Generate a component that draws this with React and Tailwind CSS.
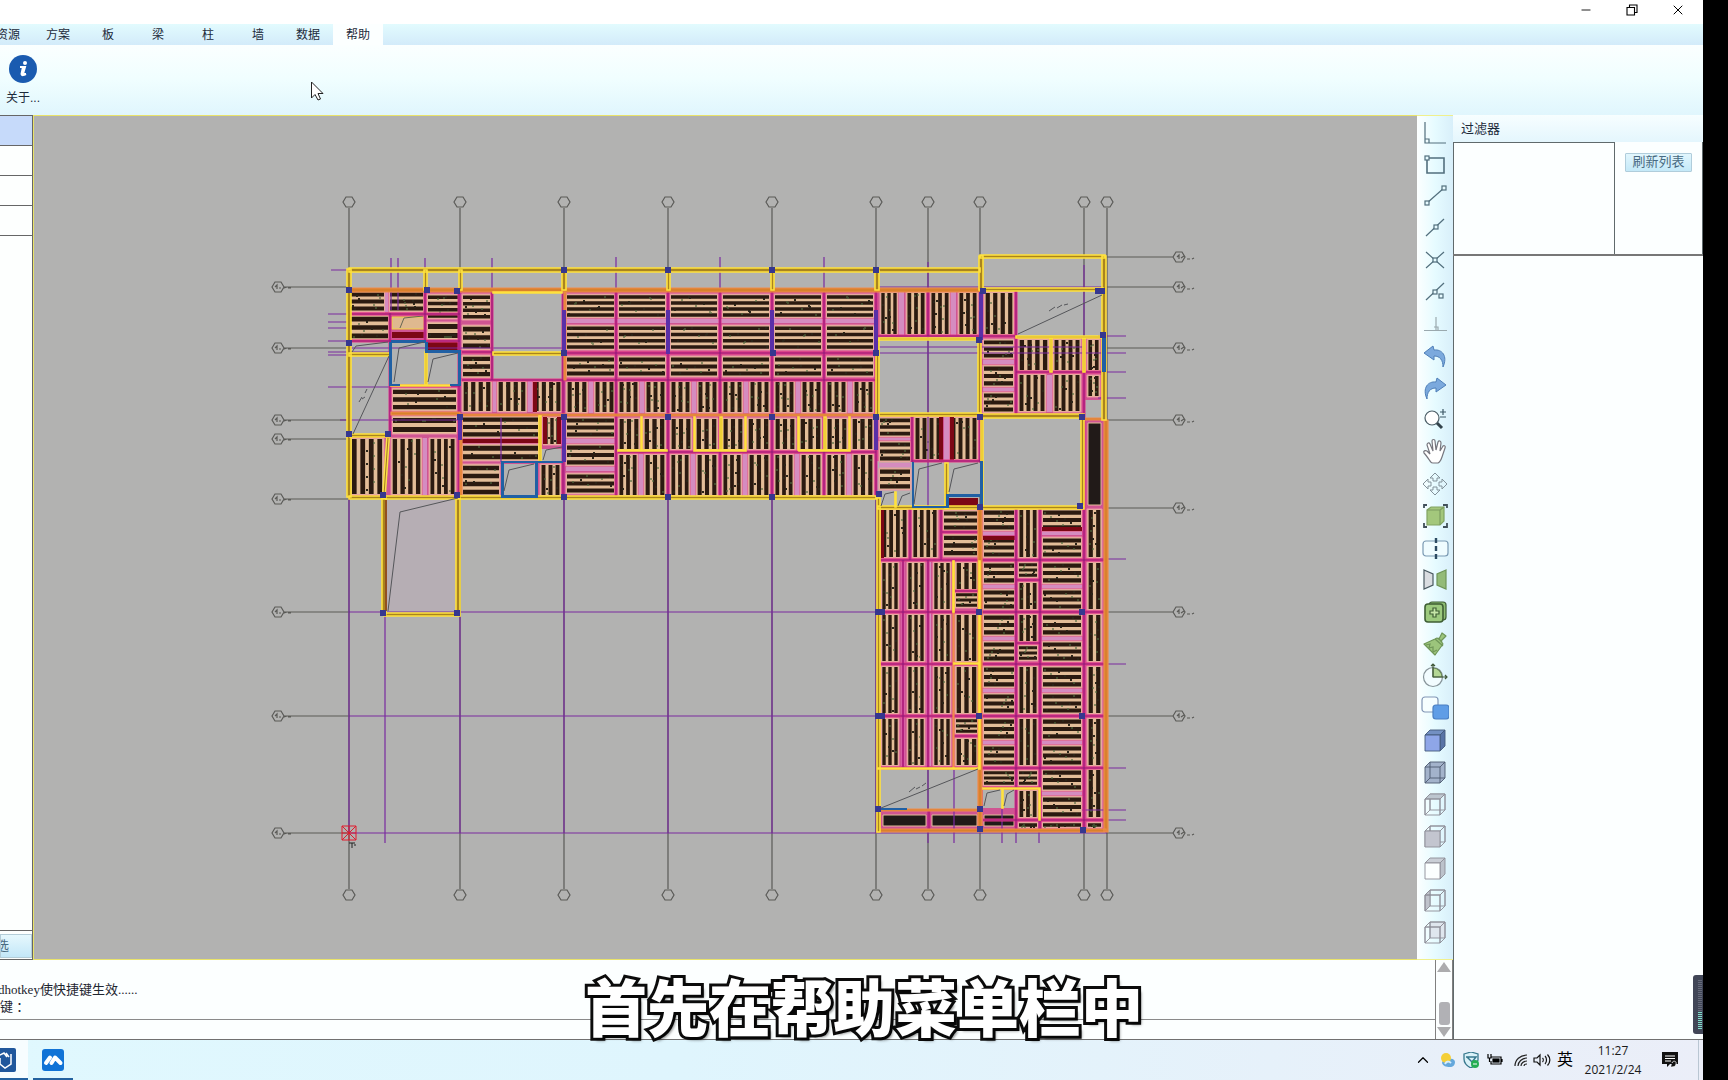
import { Minus, X, ChevronUp } from 'lucide-react';

const MENUS = ['资源', '方案', '板', '梁', '柱', '墙', '数据', '帮助'];

/* ---------- drawing data: [x1, y1, x2, y2, bars] ---------- */

const COLS = [[566, 615], [618, 666], [670, 718], [722, 770], [774, 822], [826, 874]];
const BANDS = [[509, 558], [562, 610], [614, 662], [666, 714], [718, 766]];

const H_PANELS = [
  [349, 291, 385, 312, 3], [389, 291, 424, 312, 3], [427, 294, 459, 319, 4],
  [350, 315, 389, 340, 3], [427, 322, 459, 340, 2],
  [462, 294, 491, 320, 4], [462, 325, 491, 350, 3], [462, 355, 491, 378, 3],
  [392, 388, 457, 411, 3], [392, 416, 457, 434, 2],
  [462, 416, 539, 438, 3], [462, 444, 539, 461, 2], [462, 464, 500, 496, 4],
  [566, 417, 615, 438, 3], [566, 444, 615, 466, 3], [566, 473, 615, 494, 3],
  [983, 339, 1014, 359, 3], [983, 365, 1014, 387, 3], [983, 392, 1014, 413, 3],
  [879, 417, 911, 437, 3], [879, 441, 911, 462, 3], [879, 468, 911, 490, 3],
  [943, 510, 978, 531, 3], [943, 534, 978, 557, 3], [955, 592, 978, 608, 3],
  [955, 718, 978, 734, 3], [1018, 562, 1038, 578, 3], [1018, 645, 1038, 661, 3],
  [983, 770, 1015, 786, 3], [1018, 770, 1038, 786, 3],
  [1042, 769, 1082, 791, 3], [1042, 796, 1082, 818, 3],
  [1042, 822, 1082, 828, 1], [1018, 822, 1038, 828, 1], [1087, 822, 1102, 828, 1],
];

COLS.forEach(([a, b]) => {
  H_PANELS.push([a, 294, b, 318, 4], [a, 325, b, 350, 4], [a, 356, b, 377, 3]);
});
BANDS.forEach(([a, b]) => {
  H_PANELS.push([983, a, 1015, a + 22, 3], [983, b - 21, 1015, b, 3]);
  H_PANELS.push([1042, a, 1082, a + 22, 3], [1042, b - 21, 1082, b, 3]);
});

const V_PANELS = [
  [350, 438, 384, 495, 4], [391, 438, 422, 495, 4], [429, 438, 456, 495, 4],
  [462, 381, 492, 412, 4], [497, 381, 527, 412, 4], [533, 381, 562, 412, 4],
  [540, 464, 561, 496, 3], [543, 417, 561, 445, 3],
  [880, 292, 898, 335, 3], [906, 292, 926, 335, 3], [930, 292, 950, 335, 3], [958, 292, 978, 335, 3],
  [984, 292, 1014, 335, 4],
  [1018, 339, 1049, 371, 4], [1053, 339, 1081, 371, 4], [1087, 339, 1100, 371, 2],
  [1018, 374, 1046, 412, 4], [1053, 374, 1081, 412, 4], [1087, 375, 1100, 397, 2],
  [914, 417, 942, 460, 4], [950, 417, 978, 460, 4],
  [881, 509, 908, 558, 4], [912, 509, 938, 558, 4],
  [955, 562, 978, 590, 3], [955, 614, 978, 662, 3], [955, 666, 978, 714, 3], [955, 738, 978, 766, 3],
  [1018, 509, 1038, 558, 3], [1018, 582, 1038, 610, 3], [1018, 614, 1038, 642, 3],
  [1018, 666, 1038, 714, 3], [1018, 718, 1038, 766, 3], [1018, 790, 1038, 818, 3],
  [1087, 769, 1102, 818, 2],
];

COLS.forEach(([a, b], i) => {
  const mid = Math.round((a + b) / 2);
  V_PANELS.push([a, 381, mid - 3, 413, 3], [mid + 3, 381, b, 413, 3]);
  if (i > 0) {
    V_PANELS.push([a, 418, mid - 2, 450, 3], [mid + 1, 418, b, 450, 3]);
    V_PANELS.push([a, 454, mid - 4, 496, 3], [mid + 2, 454, b, 496, 3]);
  }
});
BANDS.forEach(([a, b], i) => {
  V_PANELS.push([1087, a, 1102, b, 2]);
  if (i > 0) V_PANELS.push([881, a, 899, b, 3], [907, a, 925, b, 3], [933, a, 951, b, 3]);
});

// slab areas that sit behind the panels
const SLABS = [
  [349, 289, 460, 341], [391, 386, 460, 436], [349, 436, 460, 497], [460, 291, 493, 380],
  [460, 379, 565, 498], [563, 291, 876, 498], [877, 290, 980, 337], [980, 290, 1017, 416],
  [1016, 337, 1102, 373], [1016, 373, 1084, 415], [1084, 373, 1102, 400], [877, 416, 980, 461],
  [877, 508, 980, 768], [980, 508, 1106, 832], [877, 810, 982, 832], [1084, 420, 1106, 510],
];

// openings left free of slabs
const VOIDS = [
  [504, 464, 536, 496], [541, 449, 562, 461], [912, 463, 945, 507], [948, 463, 980, 496],
  [879, 492, 911, 507], [983, 790, 1015, 808],
];

const DARK_RED = [
  [392, 332, 424, 338], [427, 342, 459, 350], [462, 439, 539, 443], [533, 382, 537, 412],
  [543, 417, 547, 444], [557, 417, 561, 444], [939, 417, 943, 460], [950, 417, 954, 460],
  [949, 498, 978, 506], [881, 510, 884, 558], [983, 536, 1015, 540], [1042, 527, 1082, 531],
];

const YELLOW = [
  [349, 268, 980, 272], [347, 269, 351, 497], [424, 270, 427, 290], [459, 270, 462, 290],
  [562, 270, 566, 290], [667, 270, 670, 290], [771, 270, 774, 290], [875, 270, 879, 290],
  [980, 255, 1105, 258], [979, 256, 983, 290], [1102, 256, 1106, 420], [983, 288, 1103, 291],
  [493, 292, 562, 293], [493, 352, 562, 355], [349, 353, 390, 356], [350, 434, 390, 437],
  [391, 385, 450, 386], [425, 352, 427, 385], [349, 496, 876, 499], [382, 498, 386, 614],
  [456, 498, 460, 614], [384, 613, 460, 616], [879, 338, 980, 340], [876, 340, 879, 415],
  [978, 340, 981, 415], [879, 413, 980, 416], [980, 414, 1084, 418], [981, 418, 983, 506],
  [1081, 418, 1084, 506], [945, 463, 948, 508], [877, 498, 880, 832], [878, 506, 1084, 509],
  [1016, 336, 1103, 338], [1050, 338, 1052, 372], [1083, 338, 1085, 372],
  [895, 492, 896, 507], [1002, 789, 1003, 808], [983, 788, 1040, 789], [1039, 789, 1040, 820],
  [641, 417, 642, 450], [694, 417, 695, 450], [720, 417, 722, 450], [745, 417, 746, 450],
  [798, 417, 799, 450], [824, 417, 826, 450], [849, 417, 850, 450], [618, 450, 667, 451],
  [694, 450, 746, 451], [799, 450, 850, 451], [539, 416, 541, 462], [877, 768, 980, 769],
  [953, 561, 954, 612], [954, 663, 980, 664], [979, 561, 980, 768],
];

const ORANGE = [
  [349, 288, 980, 292], [391, 412, 460, 415], [460, 414, 876, 416], [460, 416, 462, 497],
  [978, 508, 982, 832], [1104, 420, 1108, 832], [877, 829, 1106, 832], [877, 809, 980, 811],
  [953, 561, 954, 768], [1084, 418, 1106, 420], [564, 292, 566, 380],
];

const MAGENTA_H = [
  [349, 460, 314], [349, 460, 341], [391, 460, 386], [462, 876, 380], [462, 493, 352],
  [563, 876, 353], [618, 876, 452], [877, 1016, 336], [912, 980, 461], [1016, 1102, 372],
  [877, 1106, 560], [877, 1106, 612], [877, 1106, 664], [877, 1106, 716], [877, 1106, 768],
  [983, 1106, 820], [983, 1040, 788], [954, 980, 591], [954, 980, 736], [1017, 1040, 580],
  [1017, 1040, 643], [942, 980, 532],
];

const MAGENTA_V = [
  [349, 290, 340], [390, 313, 436], [425, 290, 340], [459, 290, 497], [492, 292, 380],
  [563, 292, 497], [616, 292, 497], [668, 292, 497], [720, 292, 497], [772, 292, 497],
  [824, 292, 497], [876, 292, 497], [928, 290, 336], [981, 290, 336], [1016, 290, 414],
  [1084, 373, 830], [912, 417, 462], [980, 416, 462], [1016, 508, 830], [1040, 508, 830],
  [928, 560, 768], [903, 560, 768], [941, 508, 560], [910, 508, 560], [929, 811, 830],
];

const PINK = [
  [385, 291, 388, 312], [566, 319, 874, 323], [566, 439, 615, 443], [566, 467, 615, 471],
  [983, 360, 1014, 364], [983, 388, 1014, 391], [879, 438, 911, 440], [879, 463, 911, 467],
  [944, 417, 949, 460], [1047, 375, 1052, 412], [899, 292, 904, 335], [951, 292, 956, 335],
  [423, 438, 427, 495], [493, 381, 496, 412], [528, 381, 532, 412], [901, 562, 905, 766],
  [926, 562, 931, 766], [909, 509, 911, 558], [983, 532, 1015, 535], [1042, 532, 1082, 535],
  [983, 585, 1015, 588], [1042, 585, 1082, 588], [983, 637, 1015, 640], [1042, 637, 1082, 640],
  [983, 689, 1015, 692], [1042, 689, 1082, 692], [983, 741, 1015, 744], [1042, 741, 1082, 744],
  [1042, 792, 1082, 795],
];

COLS.forEach(([a, b], i) => {
  const mid = Math.round((a + b) / 2);
  PINK.push([mid - 2, 381, mid + 2, 413]);
  if (i > 0) PINK.push([mid - 3, 454, mid + 1, 496]);
});

const BLUE = [
  [389, 342, 392, 386], [391, 340, 426, 343], [425, 342, 428, 353], [427, 350, 460, 353],
  [458, 350, 461, 386], [562, 311, 565, 354], [501, 461, 504, 498], [502, 461, 563, 463],
  [535, 462, 538, 498], [502, 495, 538, 498], [912, 462, 914, 508], [912, 506, 948, 508],
  [946, 494, 949, 508], [946, 494, 982, 497], [980, 461, 983, 508], [1102, 335, 1106, 372],
  [880, 808, 907, 810], [391, 384, 400, 386], [450, 384, 461, 386],
];

const NODES = [
  [349, 290], [427, 290], [457, 291], [349, 343], [349, 434], [388, 434], [383, 495], [457, 495],
  [383, 613], [457, 613], [460, 417], [564, 270], [668, 270], [772, 270], [876, 270],
  [564, 417], [668, 417], [772, 417], [876, 417], [564, 497], [668, 497], [772, 497],
  [983, 291], [1102, 291], [1098, 291], [979, 340], [1103, 335], [980, 417], [1082, 417],
  [879, 494], [980, 507], [1080, 506], [878, 612], [882, 612], [979, 612], [1082, 612],
  [878, 716], [882, 716], [979, 716], [1082, 716], [878, 809], [980, 809], [980, 829], [1083, 830],
  [773, 353], [876, 353], [564, 353],
];

const AXES_X = [349, 460, 564, 668, 772, 876, 928, 980, 1084, 1107];
const LEFT_Y = [287, 348, 420, 439, 499, 612, 716, 833];
const RIGHT_Y = [257, 287, 348, 420, 508, 612, 716, 833];

const PURPLE = [
  'M349 499V833M385 499V843M460 617V833M564 499V833M668 499V833M772 499V833M876 499V833',
  'M349 612H876M349 716H876M349 833H876M331 270H349M328 314H350M328 322H350M328 328H350',
  'M328 341H460M328 352H390M328 355H390M328 387H390M350 348H563M340 420H460',
  'M391 258V310M398 258V310M425 258V290M492 258V292M616 257V292M720 257V292M824 257V292',
  'M564 268V499M668 268V499M772 268V499M876 268V499M928 262V510M980 270V420M1084 265V420',
  'M877 347H1082M877 353H1126M1098 336H1126M1098 372H1126M1098 398H1126M1106 270V833',
  'M1100 559H1126M1100 664H1126M1100 768H1126M1082 810H1126M1082 820H1126',
  'M928 770V843M954 770V843M1002 809V843M1016 809V843M1039 809V843M980 257V292M877 612H1107M877 716H1107M877 833H1107',
  'M501 418V462M460 290V417M876 287H1107M1107 257H1060M980 287H876',
];

const OPENINGS =
  'M353 434L389 356M394 382L399 348L424 342M428 382L433 359L458 353M352 352L356 346L388 342' +
  'M388 611L400 512L458 498M504 491L509 470L534 464M543 460L546 450L562 447' +
  'M914 504L919 469L942 463M949 492L954 469L978 463M881 506L885 494L894 492M898 506L902 496L910 493' +
  'M1018 334L1102 295M881 808L978 769M984 806L987 793L1000 790M1004 806L1007 794L1014 790';

const box = ([a, b, c, d]) => `M${a} ${b}H${c}V${d}H${a}Z`;
const boxes = (list) => list.map(box).join('');
const hexagon = (x, y) => `M${x - 6} ${y}l3 -5h6l3 5l-3 5h-6z`;

const bars = (list, vertical) =>
  list
    .map(([a, b, c, d, n]) => {
      const step = (vertical ? c - a : d - b) / n;
      const thick = step * 0.56;
      return Array.from({ length: n })
        .map((_, i) => {
          const o = i * step + (step - thick) / 2;
          return vertical
            ? box([a + o, b + 1, a + o + thick, d - 1])
            : box([a + 1, b + o, c - 1, b + o + thick]);
        })
        .join('');
    })
    .join('');

const specks = (list, seed) =>
  list
    .map(([a, b, c, d], k) =>
      [0, 1, 2, 3]
        .map((i) => {
          const px = a + 2 + ((k * 17 + i * 29 + seed * 7) % Math.max(3, c - a - 5));
          const py = b + 2 + ((k * 11 + i * 13 + seed * 5) % Math.max(3, d - b - 5));
          return `M${px} ${py}h2v2h-2z`;
        })
        .join('')
    )
    .join('');

const FloorPlan = () => (
  <svg viewBox="34 116 1383 843" className="block h-full w-full" role="img" aria-label="Floor plan">
    {/* axes and bubbles */}
    <g fill="none" stroke="#5a5a57" strokeWidth="1.2">
      {AXES_X.map((x) => (
        <path key={x} d={`M${x} 208V889${hexagon(x, 202)}${hexagon(x, 895)}`} />
      ))}
      {LEFT_Y.map((y) => (
        <path key={y} d={`M284 ${y}H350${hexagon(278, y)}M275 ${y}l2 -2v4M279 ${y + 1}h2M284 ${y + 1}l3 -1M288 ${y + 1}h3`} />
      ))}
      {RIGHT_Y.map((y) => (
        <path key={y} d={`M1106 ${y}H1173${hexagon(1179, y)}M1177 ${y}l2 -2v4M1181 ${y + 1}l3 -2M1187 ${y + 2}h3M1192 ${y + 2}l2 -1`} />
      ))}
    </g>
    <rect x="387" y="500" width="70" height="112" fill="#b6aeb4" />

    {/* slabs */}
    <path d={boxes(SLABS)} fill="#cf5592" />
    <path d={boxes([...H_PANELS, ...V_PANELS])} fill="#e3bd98" stroke="#ec92a4" strokeWidth="1" />
    <path d={boxes(PINK)} fill="#d58cc0" />
    <path d={bars(H_PANELS, false)} fill="#2b1a10" />
    <path d={bars(V_PANELS, true)} fill="#2b1a10" />
    <path d={specks(H_PANELS, 1) + specks(V_PANELS, 2)} fill="#2b2418" />
    <path d={specks(H_PANELS, 4) + specks(V_PANELS, 3)} fill="#4f6b3f" opacity="0.6" />
    <path d="M1088 423H1101V505H1088ZM883 815H926V826H883ZM932 815H977V826H932ZM984 815H1014V826H984Z" fill="#211a18" stroke="#e3bd98" />
    <path d={boxes(DARK_RED)} fill="#7c0715" />
    <path d="M392 317H424V329H392Z" fill="#dfb98f" stroke="#f0d040" />
    <path d="M400 328L404 318L423 316" fill="none" stroke="#665" />
    <path d={boxes(VOIDS)} fill="#b2b2b1" />

    <path d={PURPLE.join('')} fill="none" stroke="#7a2ba0" strokeWidth="1.2" />

    {/* beams */}
    {MAGENTA_H.map(([a, b, y]) => (
      <path key={`${a}-${y}`} d={`M${a} ${y}H${b}`} stroke="#e83a86" strokeWidth="3" />
    ))}
    {MAGENTA_V.map(([x, a, b]) => (
      <path key={`${x}-${a}`} d={`M${x} ${a}V${b}`} stroke="#dc3088" strokeWidth="3" />
    ))}
    <path
      d={MAGENTA_H.map(([a, b, y]) => `M${a} ${y}H${b}`).join('') + MAGENTA_V.map(([x, a, b]) => `M${x} ${a}V${b}`).join('')}
      stroke="#8c1b78"
      strokeWidth="1"
    />
    <path d={boxes(ORANGE)} fill="#d9812c" stroke="#f08c4c" strokeWidth="1.2" />
    <path d={boxes(YELLOW)} fill="#a98420" stroke="#ffe23c" strokeWidth="1.6" />
    <path d="M388 438L384 495" stroke="#fbe04a" strokeWidth="4" />
    <path d="M388 438L384 495" stroke="#a37a1c" strokeWidth="1" />
    <path d="M386 500V611" stroke="#93501f" strokeWidth="2" />
    <path d={boxes(BLUE)} fill="#2060a4" />
    <path d="M564 310V354M668 310V354M772 310V354M876 310V354M876 417V450M564 417V462M460 417V440M981 292V340" stroke="#5a2fa8" strokeWidth="4" />
    <path d={OPENINGS} fill="none" stroke="#55565a" strokeWidth="1" />
    <path d="M359 402l3 -5M362 399l3 -2M365 393l2 -4M1049 311l6 -4M1057 308l5 -3M1064 305l4 -1M909 792l6 -5M916 789l4 -2M922 786l4 -3" stroke="#55565a" />
    {NODES.map(([x, y]) => (
      <rect key={`${x}-${y}`} x={x - 3} y={y - 3} width="6" height="6" fill="#36378f" />
    ))}

    {/* origin marker */}
    <path d="M342 826H356V840H342ZM342 826L356 840M356 826L342 840M349 826V840M342 833H356" fill="none" stroke="#e01b2c" strokeWidth="1" />
    <path d="M349 843h6M352 843v5M354 845h2" stroke="#222" fill="none" />
  </svg>
);

/* ---------- toolbar icons, 28 x 28 ---------- */

const Icon = ({ children }) => (
  <svg viewBox="0 0 28 28" className="size-7" fill="none" stroke="#526f7d" strokeWidth="1.2" aria-hidden="true">
    {children}
  </svg>
);

const Snap = ({ x, y }) => <rect x={x - 2} y={y - 2} width="4" height="4" fill="#e6fbff" />;

const Cube = ({ top = 'none', side = 'none', front = 'none', back = 'none', left = 'none', wire = true, line = '#8d8d96' }) => (
  <Icon>
    <g stroke={line} strokeWidth="0.9" strokeLinejoin="round">
      <path d="M9 4H24V20H9Z" fill={back} stroke={wire ? line : 'none'} />
      <path d="M4 9L9 4V20L4 25Z" fill={left} stroke={wire ? line : 'none'} />
      <path d="M4 9L9 4H24L19 9Z" fill={top} />
      <path d="M19 9L24 4V20L19 25Z" fill={side} />
      <path d="M4 9H19V25H4Z" fill={front} />
    </g>
  </Icon>
);

const Undo = () => (
  <path d="M3 11L12 4L13 8C21 7 27 14 22 25C22 18 19 14 13 14L13 18Z" fill="#7ba9dd" stroke="#4f7fb8" strokeWidth="1" />
);

const TOOLS = [
  ['端点', <Icon key="i"><path d="M4 4V25H25M4 21H8V25" /></Icon>],
  ['矩形', <Icon key="i"><path d="M6 8H23V23H6Z" strokeWidth="1.6" /><Snap x={6} y={8} /></Icon>],
  ['直线', <Icon key="i"><path d="M6 21L23 6" /><Snap x={6} y={21} /><Snap x={23} y={6} /></Icon>],
  ['中点', <Icon key="i"><path d="M5 22L23 5" /><Snap x={15} y={13} /></Icon>],
  ['交点', <Icon key="i"><path d="M5 6L23 22M23 6L5 22" /><Snap x={14} y={14} /></Icon>],
  ['最近点', <Icon key="i"><path d="M5 22L23 5" /><Snap x={14} y={14} /><Snap x={20} y={18} /></Icon>],
  ['垂足', <Icon key="i"><path d="M15 7V20M3 20.500H26M13 17H17V20" stroke="#9aa9ae" /></Icon>],
  ['撤销', <Icon key="i"><Undo /></Icon>],
  ['重做', <Icon key="i"><g transform="matrix(-1 0 0 1 28 0)"><Undo /></g></Icon>],
  ['缩放', <Icon key="i"><circle cx="11" cy="12" r="7" fill="#fff" stroke="#4b5d66" /><path d="M16 17L21 22" stroke="#33434b" strokeWidth="3" /><path d="M19 6H25M22 3V9M19 11H25" stroke="#3c5866" /></Icon>],
  ['平移', <Icon key="i"><path d="M9 23C7 20 5 17 3 15C2 13 4 12 6 13L9 16L6 7C6 5 8 4 9 6L12 13L11 3C11 1 14 1 14 3L15 12L17 4C18 2 20 3 20 5L19 13L22 8C23 7 25 8 24 10L21 19C20 22 19 24 17 25H12C10 25 10 24 9 23Z" fill="#fff" stroke="#75757d" /></Icon>],
  ['移动', <Icon key="i"><path d="M14 3L19 8H16V11H12V8H9ZM14 25L19 20H16V17H12V20H9ZM2 14L7 9V12H10V16H7V19ZM26 14L21 9V12H18V16H21V19Z" stroke="#83929a" strokeWidth="1" /></Icon>],
  ['全图', <Icon key="i"><path d="M6 8L10 5H23V19L19 23H6Z" fill="#a3c77c" stroke="#82a463" /><path d="M6 8H19V23M19 8L23 5" stroke="#7c9c60" /><path d="M3 6V3H6M22 3H26V6M3 21V25H6M26 21V25H22" stroke="#41505a" strokeWidth="1.8" /></Icon>],
  ['打断', <Icon key="i"><rect x="2" y="7" width="25" height="15" rx="3" stroke="#7a99b3" fill="#effcff" /><path d="M15 4V25" stroke="#2c4a62" strokeWidth="2.400" strokeDasharray="5 3" /></Icon>],
  ['镜像', <Icon key="i"><path d="M3 4L12 8V19L3 23Z" fill="#d9dde1" stroke="#4a5a62" /><path d="M25 4L16 8V19L25 23Z" fill="#93bb78" stroke="#6f9658" /></Icon>],
  ['添加', <Icon key="i"><rect x="8" y="4" width="17" height="18" rx="3" fill="#8dbd72" stroke="#3f5f35" /><rect x="4" y="6" width="18" height="18" rx="3" fill="#9cca7e" stroke="#3f5f35" strokeWidth="1.600" /><path d="M12 10h3v3h3v3h-3v3h-3v-3h-3v-3h3z" fill="#c5e6a8" stroke="#3f5f35" /></Icon>],
  ['刷新', <Icon key="i"><path d="M21 3L25 6L20 11L22 14L14 25L3 14L14 9L16 8L18 9Z" fill="#9cc57c" stroke="#6f9658" strokeLinejoin="round" /><path d="M14 9L22 16M17 8L21 12M5 15L9 14L8 18L12 17L12 22L16 20" stroke="#6f9658" /></Icon>],
  ['旋转', <Icon key="i"><circle cx="12" cy="15" r="9.500" fill="#f2fcff" stroke="#87949a" /><path d="M12 15V6A9 9 0 0 1 21 15Z" fill="#b5d795" stroke="#648053" /><path d="M12 15V3M12 15H26M10 4L12 2L14 4M24 13L26 15L24 17" stroke="#40583a" /></Icon>],
  ['复制', <Icon key="i"><rect x="1" y="3" width="16" height="15" rx="3" fill="#f6feff" stroke="#8195b5" /><rect x="12" y="11" width="16" height="14" rx="3" fill="#5f9de6" stroke="#4a7fc2" /></Icon>],
  ['实体', <Cube key="i" front="#8ea6e8" top="#7390c2" side="#5873a6" wire={false} line="#44597c" />],
  ['透视', <Icon key="i"><g strokeWidth="0.9" stroke="#4d5a70"><path d="M4 9L9 4H24V20L19 25H4Z" fill="#a3b3cb" /><path d="M4 9H19V25M19 9L24 4M9 4V20H24M9 20L4 25" /></g></Icon>],
  ['俯视', <Cube key="i" top="#bdc6cf" />],
  ['前视', <Cube key="i" front="#c3c5cf" />],
  ['右视', <Cube key="i" top="#c9ced6" side="#bcc2cb" front="#fbffff" wire={false} />],
  ['左视', <Cube key="i" left="#bfc3cc" />],
  ['后视', <Cube key="i" back="#dfe6ee" />],
];

/* ---------- window parts ---------- */

const TitleBar = () => (
  <header className="flex h-6 items-start justify-end bg-white pr-0.5 text-black">
    <button aria-label="Minimize" className="flex h-5 w-[46px] items-center justify-center">
      <Minus className="size-3.5" strokeWidth={1.5} />
    </button>
    <button aria-label="Restore" className="flex h-5 w-[46px] items-center justify-center">
      <svg viewBox="0 0 12 12" className="size-3" fill="none" stroke="currentColor" strokeWidth="1.1">
        <path d="M1 3.500H8.500V11H1ZM3.500 3.500V1H11V8.500H8.500" />
      </svg>
    </button>
    <button aria-label="Close" className="flex h-5 w-[46px] items-center justify-center">
      <X className="size-4" strokeWidth={1.5} />
    </button>
  </header>
);

const MenuBar = () => (
  <nav className="flex h-[21px] overflow-hidden bg-linear-to-b from-[#e2fbfe] to-[#d3ebfa] text-xs text-[#1c2a3a]">
    <div className="-ml-[17px] flex">
      {MENUS.map((name) => (
        <button
          key={name}
          className={name === '帮助' ? 'w-[50px] bg-[#fcffff] text-center' : 'w-[50px] text-center'}
        >
          {name}
        </button>
      ))}
    </div>
  </nav>
);

const Ribbon = () => (
  <div className="h-[70px] bg-linear-to-b from-[#fbffff] via-[#f0feff] to-[#e0f6fd] px-[3px] pt-2.5">
    <button className="flex w-10 flex-col items-center gap-[7px] text-xs text-[#1c2a3a]">
      <svg viewBox="0 0 28 28" className="size-7" aria-hidden="true">
        <circle cx="14" cy="14" r="14" fill="#1a5bb0" />
        <circle cx="16" cy="8" r="2" fill="#fff" />
        <path d="M11 12H16L14 19H17M14 12L12.500 19C13 21 15 20 17 19" fill="none" stroke="#fff" strokeWidth="2" />
      </svg>
      <span className="whitespace-nowrap">关于...</span>
    </button>
  </div>
);

const LeftPanel = () => (
  <aside className="flex w-[33px] shrink-0 flex-col justify-between border-r border-[#666] bg-[#fdfffe]">
    <ul className="border-t border-[#666]">
      <li className="h-[30px] border-b border-[#666] bg-[#c6dafa]"></li>
      <li className="h-[30px] border-b border-[#666]"></li>
      <li className="h-[30px] border-b border-[#666]"></li>
      <li className="h-[30px] border-b border-[#666]"></li>
    </ul>
    <div className="border-y border-[#666] pb-px pt-[3px]">
      <button className="flex h-6 w-full items-center overflow-hidden border border-[#b4cdd8] bg-linear-to-b from-[#e6f8fd] to-[#c3e7f8] text-[13px] text-[#4a6a80]">
        <span className="-ml-[5px]">选</span>
      </button>
    </div>
  </aside>
);

const Console = () => (
  <section className="flex h-20 border-b border-[#707070] bg-[#fcffff]">
    <div className="flex min-w-0 flex-1 flex-col">
      <div className="flex-1 overflow-hidden pt-[21px] font-['Liberation_Serif','Noto_Sans_CJK_SC',serif] text-[13px] leading-[17px] text-[#1e2630]">
        <p className="-ml-0.5">dhotkey使快捷键生效......</p>
        <p>键 ：</p>
      </div>
      <input aria-label="Command" className="block h-5 w-full border-t border-[#8a8a8a] bg-transparent px-1 text-xs outline-none" />
    </div>
    <div className="flex w-[18px] flex-col items-center justify-between border-x border-[#808080] py-0.5">
      <svg viewBox="0 0 14 10" className="h-2.5 w-3.5" fill="#acacae"><path d="M7 0L14 10H0Z" /></svg>
      <div className="flex flex-col items-center gap-0.5">
        <div className="h-[23px] w-[11px] rounded-[3px] bg-[#b1b1b5]"></div>
        <svg viewBox="0 0 14 10" className="h-2.5 w-3.5" fill="#acacae"><path d="M0 0H14L7 10Z" /></svg>
      </div>
    </div>
  </section>
);

const FilterPanel = () => (
  <aside className="flex w-[250px] shrink-0 flex-col border-b border-[#707070] bg-[#fcffff] text-[13px]">
    <h2 className="h-[27px] bg-linear-to-b from-[#f7feff] to-[#e4f6fd] pl-2 leading-7 text-[#1c2a3a]">过滤器</h2>
    <div className="flex h-[114px] border-b-2 border-[#777]">
      <div className="w-[162px] border border-b-0 border-[#606a6c]"></div>
      <div className="flex-1 border-r border-[#606a6c] pl-2.5 pt-2.5">
        <button className="h-[19px] w-[67px] rounded-[1px] border border-[#b0cddb] bg-linear-to-b from-[#e2f6fd] to-[#c4e9f8] leading-4 text-[#486a82]">
          刷新列表
        </button>
      </div>
    </div>
    <div className="flex-1 border-l border-[#606a6c]"></div>
  </aside>
);

const Taskbar = () => (
  <footer className="flex h-10 justify-between bg-linear-to-r from-[#e0f8fe] via-[#dff5fd] via-40% to-[#ebeef8]">
    <div className="flex gap-[5px]">
      <button aria-label="CAD" className="flex h-10 w-7 justify-start overflow-hidden border-b-2 border-[#23619f] bg-[#f7fdff] pt-2">
        <svg viewBox="0 0 24 24" className="-ml-2 size-6 shrink-0" fill="none">
          <rect width="24" height="24" rx="2" fill="#20579c" />
          <path d="M6 8L12 5L15 9M8 10V16L13 20L19 16V6M14 5L17 9" stroke="#fff" strokeWidth="1.500" />
        </svg>
      </button>
      <button aria-label="Meeting" className="flex h-10 w-10 justify-center border-b-2 border-[#23619f] pt-[9px]">
        <svg viewBox="0 0 22 22" className="-ml-px size-[22px]">
          <rect width="22" height="22" rx="3" fill="#1173d6" />
          <path d="M4 14L8 8.500M9.500 14L13 8.500L18.500 14" fill="none" stroke="#fff" strokeWidth="4" strokeLinecap="round" strokeLinejoin="round" />
        </svg>
      </button>
    </div>
    <div className="flex items-center pr-1 text-black">
      <button aria-label="Show hidden icons" className="w-6">
        <ChevronUp className="mx-auto size-[18px]" strokeWidth={1.6} />
      </button>
      <div className="flex items-center gap-2 pl-1">
        <svg viewBox="0 0 16 16" className="size-4">
          <path d="M3 11C3 8 7 7 9 9C11 5 16 7 16 10C16 13 14 15 11 15C7 15 4 14 3 11Z" fill="#64a8dc" />
          <circle cx="7" cy="6" r="5" fill="#f4cf38" />
          <path d="M6 12C8 8 11 10 12 11" stroke="#d5edff" strokeWidth="2" fill="none" />
        </svg>
        <svg viewBox="0 0 16 16" className="size-4" fill="none">
          <path d="M1 2L8 0L15 2V8C14 12 11 14 8 16C4 14 1 11 1 7Z" fill="#d9f1f8" stroke="#36778d" strokeWidth="1.300" />
          <path d="M3 5H13L9 10L4 5" stroke="#36778d" strokeWidth="1.500" />
          <circle cx="12" cy="12" r="4" fill="#25ad54" />
          <path d="M10 12H14" stroke="#fff" />
        </svg>
        <svg viewBox="0 0 16 16" className="size-4" fill="none" stroke="#000" strokeWidth="1.200">
          <path d="M4 5H14V12H4V9M15 7V10" />
          <rect x="6" y="7" width="6" height="3" fill="#000" />
          <path d="M1 3V6H4V3M1 2V3M4 2V3M2.500 6V10" />
        </svg>
        <svg viewBox="0 0 16 16" className="ml-0.5 size-4" fill="none" stroke="#222" strokeWidth="1.200">
          <path d="M2 14C2 8 7 3 14 3M5 14C5 10 9 6 14 6M8 14C8 11.500 10.500 9 14 9M11 14C11 13 12 12 14 12" />
        </svg>
        <svg viewBox="0 0 18 16" className="-ml-1 h-4 w-[18px]" fill="none" stroke="#111" strokeWidth="1.200">
          <path d="M1 6H4L7 3V13L4 10H1ZM9.500 6C10.500 7 10.500 9 9.500 10M12 4C14 6 14 10 12 12M14.500 2.500C17.500 6 17.500 10 14.500 13.500" />
        </svg>
      </div>
      <span className="ml-1.5 text-base leading-5">英</span>
      <time className="ml-2.5 w-[60px] whitespace-nowrap text-center font-['Open_Sans','Noto_Sans',sans-serif] text-xs leading-[19px] text-[#1a1a1a]">
        11:27
        <br />
        2021/2/24
      </time>
      <button aria-label="Notifications" className="ml-[19px] w-4">
        <svg viewBox="0 0 16 16" className="size-4">
          <path d="M0 0H16V12H8L5 15V12H0Z" fill="#111" />
          <path d="M3 4H13M3 6.500H13M3 9H9" stroke="#fff" />
          <path d="M10 11C11 8 15 9 14 12C14 15 10 15 9 15" fill="#111" stroke="#fff" strokeWidth="0.800" />
        </svg>
      </button>
      <div className="ml-5 h-10 border-l border-[#b9c6d2]"></div>
    </div>
  </footer>
);

const App = () => {
  return (
    <div className="relative flex min-h-screen overflow-hidden bg-black font-['Liberation_Sans','Noto_Sans_CJK_SC',sans-serif]">
      <div className="relative flex min-w-0 flex-1 flex-col bg-white">
        <TitleBar />
        <MenuBar />
        <Ribbon />
        <main className="flex flex-1">
          <div className="flex min-w-0 flex-1 flex-col">
            <div className="flex min-h-0 flex-1">
              <LeftPanel />
              <div className="min-w-0 flex-1 border-y border-l border-[#e9e36a] bg-[#b2b2b1]">
                <FloorPlan />
              </div>
              <div className="w-9 border-y border-[#f0f08c] bg-linear-to-r from-[#fcffff] via-[#e6fbff] to-[#d8effa]">
                {TOOLS.map(([name, icon]) => (
                  <button key={name} aria-label={name} className="flex h-8 w-full items-center justify-center">
                    {icon}
                  </button>
                ))}
              </div>
            </div>
            <Console />
          </div>
          <FilterPanel />
        </main>
        <Taskbar />

        {/* Volume meter on the window edge */}
        <div className="absolute bottom-[46px] right-0 flex h-[59px] w-2.5 items-center justify-end rounded-l-[3px] bg-[#414657]">
          <svg viewBox="0 0 6 50" className="h-[50px] w-1.5" fill="none" strokeWidth="4">
            <path d="M3 0V32" stroke="#666b7b" strokeDasharray="1 1" />
            <path d="M3 32V49" stroke="#7fe0cc" strokeDasharray="1 1" />
          </svg>
        </div>

        {/* Mouse pointer */}
        <svg viewBox="0 0 13 20" className="absolute left-[311px] top-[81px] h-5 w-[13px]" fill="#fff" stroke="#222" strokeWidth="1">
          <path d="M0.500 1V17L4 13.500L7 19L9.500 18L7 12.500H12Z" />
        </svg>
      </div>
      <div className="w-[25px] bg-black"></div>

      {/* Subtitle */}
      <p className="absolute bottom-[29px] left-1/2 -translate-x-1/2 whitespace-nowrap font-['Noto_Sans_CJK_SC',sans-serif] text-[62px] font-black leading-[92px] text-white [-webkit-text-stroke:6px_#0c0c0c] [paint-order:stroke_fill] [text-shadow:3px_3px_3px_rgb(0_0_0/0.5)]">
        首先在帮助菜单栏中
      </p>
    </div>
  );
};

export default App;
